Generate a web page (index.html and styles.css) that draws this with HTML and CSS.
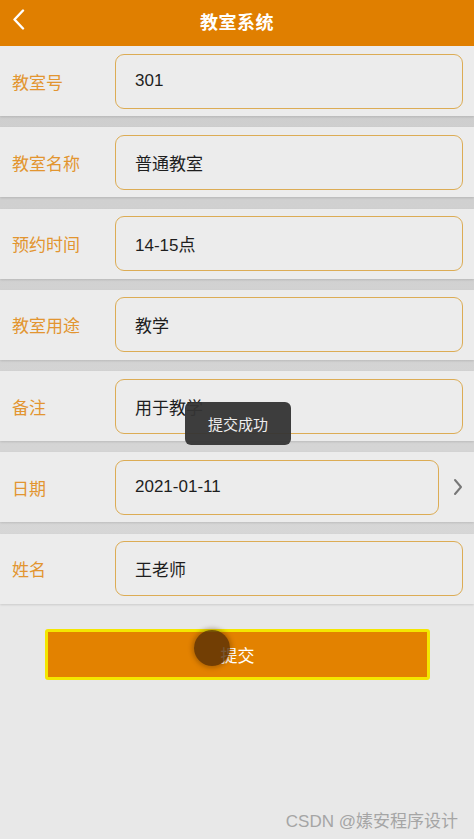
FILE: index.html
```html
<!DOCTYPE html>
<html lang="zh-CN">
<head>
    <meta charset="UTF-8">
    <meta name="viewport" content="width=device-width, initial-scale=1.0">
    <title>教室系统</title>
    <link rel="stylesheet" href="styles.css">
</head>
<body>
    <div class="page">
        <div class="header">
            <span class="back">
                <svg width="14" height="22" viewBox="0 0 14 22"><path d="M11 1.5 L2.5 10.5 L11 19.5" fill="none" stroke="#fff" stroke-width="2.4" stroke-linecap="round" stroke-linejoin="round"/></svg>
            </span>
            <h1>教室系统</h1>
        </div>

        <div class="form">
            <div class="row">
                <label>教室号</label>
                <div class="field">301</div>
            </div>
            <div class="row">
                <label>教室名称</label>
                <div class="field">普通教室</div>
            </div>
            <div class="row">
                <label>预约时间</label>
                <div class="field">14-15点</div>
            </div>
            <div class="row">
                <label>教室用途</label>
                <div class="field">教学</div>
            </div>
            <div class="row">
                <label>备注</label>
                <div class="field">用于教学</div>
            </div>
            <div class="row row-date">
                <label>日期</label>
                <div class="field">2021-01-11</div>
                <span class="arrow">
                    <svg width="12" height="20" viewBox="0 0 12 20"><path d="M3 3 L9 10 L3 17" fill="none" stroke="#777" stroke-width="2" stroke-linecap="round" stroke-linejoin="round"/></svg>
                </span>
            </div>
            <div class="row">
                <label>姓名</label>
                <div class="field">王老师</div>
            </div>
        </div>

        <div class="actions">
            <button class="submit">提交</button>
        </div>

        <div class="touch"></div>
        <div class="toast">提交成功</div>
        <div class="mark">CSDN @嫊安程序设计</div>
    </div>
</body>
</html>
```

FILE: styles.css
```css
html, body {
    margin: 0;
    padding: 0;
}
body {
    font-family: "Liberation Sans", "Noto Sans CJK SC", sans-serif;
    background: #e8e8e8;
}
.page {
    position: relative;
    width: 474px;
    height: 839px;
    overflow: hidden;
}
.header {
    height: 46px;
    box-sizing: border-box;
    padding-bottom: 5px;
    background: #e07f00;
    display: flex;
    align-items: center;
    justify-content: center;
    position: relative;
}
.header h1 {
    margin: 0;
    color: #fff;
    font-size: 18px;
    font-weight: bold;
    letter-spacing: 0.5px;
}
.back {
    position: absolute;
    left: 12px;
    top: 9px;
}
.form {
    display: flex;
    flex-direction: column;
    gap: 11.3px;
    background: linear-gradient(#cdcdcd, #d8d8d8);
}
.row {
    height: 70px;
    background: #ececec;
    display: flex;
    align-items: center;
    padding: 0 11px 0 12px;
    box-shadow: 0 1px 2px rgba(0,0,0,0.12);
}
.row label {
    width: 103px;
    flex-shrink: 0;
    color: #e29530;
    font-size: 17px;
}
.field {
    flex: 1;
    height: 55px;
    box-sizing: border-box;
    border: 1.5px solid #dcac55;
    border-radius: 9px;
    display: flex;
    align-items: center;
    padding-left: 19px;
    font-size: 17px;
    color: #1e1e1e;
}
.row-date .field {
    flex: none;
    width: 324px;
}
.arrow {
    margin-left: 13px;
    margin-top: 4px;
}
.actions {
    padding: 25px 0 0 45px;
}
.submit {
    width: 385px;
    height: 51px;
    background: #e38200;
    border: 3px solid #f4e600;
    border-radius: 3px;
    color: #fff;
    font-size: 17px;
    font-family: "Liberation Sans", "Noto Sans CJK SC", sans-serif;
}
.touch {
    position: absolute;
    left: 194px;
    top: 630px;
    width: 36px;
    height: 36px;
    border-radius: 50%;
    background: rgba(85, 45, 5, 0.8);
    box-shadow: 0 0 4px 2px rgba(85, 45, 5, 0.35);
}
.toast {
    position: absolute;
    left: 185px;
    top: 402px;
    width: 106px;
    height: 43px;
    border-radius: 6px;
    background: rgba(52, 52, 52, 0.95);
    color: #eee;
    font-size: 15px;
    display: flex;
    align-items: center;
    justify-content: center;
}
.mark {
    position: absolute;
    right: 16px;
    bottom: 7px;
    color: #a5a5a5;
    font-size: 17px;
}
```
